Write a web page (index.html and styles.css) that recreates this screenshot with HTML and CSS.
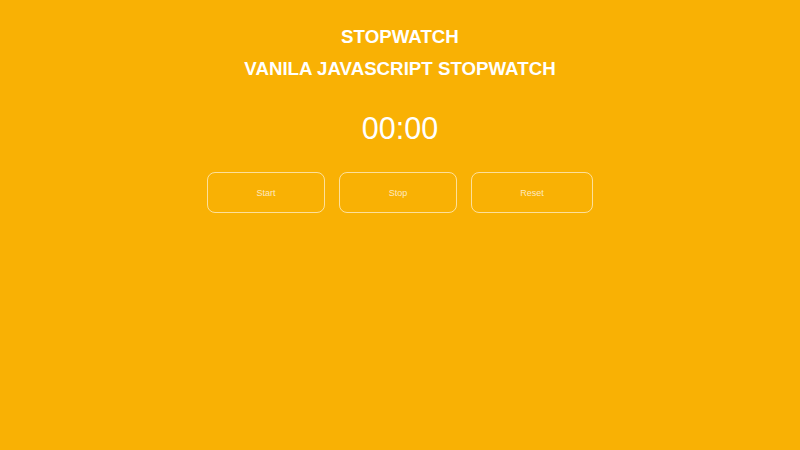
FILE: index.html
```html
<!DOCTYPE html>
<html lang="en">

<head>
    <meta charset="UTF-8">
    <meta name="viewport" content="width=device-width, initial-scale=1.0">
    <title>Stopwatch</title>
    <link rel="stylesheet" href="styles.css">
</head>

<body>
    <div class="wrapper">
        <h1>STOPWATCH</h1>
        <h2>VANILA JAVASCRIPT STOPWATCH</h2>
        <p class="display"><span class="minutes">00</span>:<span class="seconds">00</span></p>
        <div class="controls">
            <button class="start">Start</button>
            <button class="stop">Stop</button>
            <button class="reset">Reset</button>
        </div>
    </div>
</body>

</html>
```

FILE: styles.css
```css
* {
    margin: 0;
    padding: 0;
    box-sizing: border-box;
}

body {
    height: 100vh;
    background-color: #f9b104;
    font-family: "Liberation Sans", Arial, sans-serif;
    color: #fff;
}

.wrapper {
    padding-top: 26px;
    text-align: center;
}

h1,
h2 {
    font-size: 18.72px;
    font-weight: bold;
    line-height: 22px;
}

h2 {
    margin-top: 10px;
}

.display {
    margin-top: 30px;
    font-size: 30.5px;
    line-height: 36px;
}

.controls {
    margin-top: 26px;
    display: flex;
    justify-content: center;
    gap: 14px;
}

button {
    width: 118px;
    height: 41px;
    background: transparent;
    border: 1px solid rgba(255, 255, 255, 0.6);
    border-radius: 8px;
    color: rgba(255, 255, 255, 0.75);
    font-family: "Liberation Sans", Arial, sans-serif;
    font-size: 9px;
}

.reset {
    width: 122px;
}
```
